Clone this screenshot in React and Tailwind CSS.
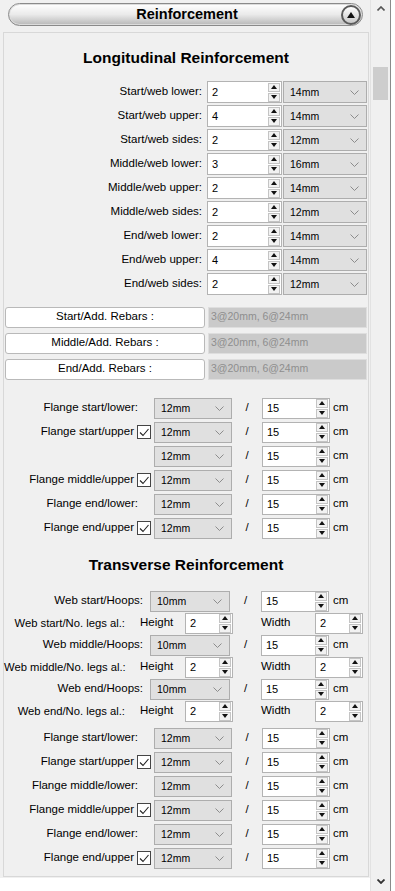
import React from 'react';

const longRows = [
  ['Start/web lower:', '2', '14mm'],
  ['Start/web upper:', '4', '14mm'],
  ['Start/web sides:', '2', '12mm'],
  ['Middle/web lower:', '3', '16mm'],
  ['Middle/web upper:', '2', '14mm'],
  ['Middle/web sides:', '2', '12mm'],
  ['End/web lower:', '2', '14mm'],
  ['End/web upper:', '4', '14mm'],
  ['End/web sides:', '2', '12mm'],
];

const addRows = ['Start/Add. Rebars :', 'Middle/Add. Rebars :', 'End/Add. Rebars :'];

const flangeTop = [
  ['Flange start/lower:', false],
  ['Flange start/upper', true],
  ['', null],
  ['Flange middle/upper', true],
  ['Flange end/lower:', false],
  ['Flange end/upper', true],
];

const flangeBottom = [
  ['Flange start/lower:', false],
  ['Flange start/upper', true],
  ['Flange middle/lower:', false],
  ['Flange middle/upper', true],
  ['Flange end/lower:', false],
  ['Flange end/upper', true],
];

const webRows = ['Web start', 'Web middle', 'Web end'];

function Spin() {
  return (
    <div className="flex flex-col gap-[1px] w-[12px]">
      <div className="h-[9px] border border-[#c4c4c4] bg-[#f2f2f2] flex items-center justify-center">
        <svg width="6" height="4" viewBox="0 0 6 4">
          <path d="M0 4 L3 0 L6 4 Z" fill="#111" />
        </svg>
      </div>
      <div className="h-[9px] border border-[#c4c4c4] bg-[#f2f2f2] flex items-center justify-center">
        <svg width="6" height="4" viewBox="0 0 6 4">
          <path d="M0 0 L6 0 L3 4 Z" fill="#111" />
        </svg>
      </div>
    </div>
  );
}

function NumInput({ value, className }) {
  return (
    <div className={`h-[21px] bg-white border border-[#b3b3b3] flex items-center pl-[4px] pr-[1px] ${className}`}>
      <span className="flex-1 text-[11px] leading-none text-black">{value}</span>
      <Spin />
    </div>
  );
}

function Select({ value, className }) {
  return (
    <div className={`h-[21px] bg-[#e0e0e0] border border-[#adadad] flex items-center pl-[6px] pr-[7px] ${className}`}>
      <span className="flex-1 text-[10.5px] leading-none text-black">{value}</span>
      <svg width="9" height="5" viewBox="0 0 9 5">
        <path d="M0.5 0.5 L4.5 4.5 L8.5 0.5" stroke="#8c8c8c" fill="none" />
      </svg>
    </div>
  );
}

function Check() {
  return (
    <div className="w-[14px] h-[14px] border border-[#444] bg-white flex items-center justify-center ml-[3px]">
      <svg width="10" height="9" viewBox="0 0 10 9">
        <path d="M1 4.5 L4 7.5 L9.5 1" stroke="#222" strokeWidth="1.1" fill="none" />
      </svg>
    </div>
  );
}

function FlangeRow({ label, check }) {
  return (
    <div className="h-[24px] flex items-center">
      <div className={`w-[148px] flex items-center justify-end ${check ? 'pr-[1px]' : 'pr-[14px]'}`}>
        <span className="whitespace-nowrap">{label}</span>
        {check && <Check />}
      </div>
      <Select value="12mm" className="ml-[2px] w-[78px]" />
      <span className="w-[30px] text-center">/</span>
      <NumInput value="15" className="w-[68px]" />
      <span className="ml-[3px]">cm</span>
    </div>
  );
}

function Title({ children }) {
  return (
    <h2 className="h-[20px] leading-[20px] text-center font-bold text-[15.5px] text-black">{children}</h2>
  );
}

export default function App() {
  return (
    <div className="w-[395px] h-[891px] bg-white flex overflow-hidden text-[11.5px] text-black font-['Liberation_Sans',Arial,sans-serif]">
      <div className="w-[370px] h-[878px] bg-[#f0f0f0] flex flex-col">
        <div className="h-[32px] pt-[3px] pl-[8px] pr-[7px]">
          <div className="h-[23px] rounded-full border border-[#8a8a8a] bg-linear-to-b from-white via-[#eaeaea] to-[#b8b8b8] shadow-[inset_0_0_0_1px_#dcdcdc] flex items-center pr-[1px]">
            <span className="flex-1 text-center font-bold text-[14.5px] text-black pl-[24px]">Reinforcement</span>
            <div className="w-[20px] h-[20px] rounded-full border-2 border-[#5a5a5a] bg-linear-to-b from-white to-[#c8c8c8] flex items-center justify-center">
              <svg width="8" height="6" viewBox="0 0 8 6">
                <path d="M0 6 L4 0 L8 6 Z" fill="#111" />
              </svg>
            </div>
          </div>
        </div>

        <div className="ml-[3px] w-[366px] h-[845px] border border-[#d8d8d8] flex flex-col pt-[15px]">
          <Title>Longitudinal Reinforcement</Title>

          <div className="mt-[12px] flex flex-col">
            {longRows.map(([label, n, d]) => (
              <div key={label} className="h-[24px] flex items-center">
                <span className="w-[200px] text-right pr-[2px] whitespace-nowrap">{label}</span>
                <NumInput value={n} className="ml-[3px] w-[75px] h-[22px]" />
                <Select value={d} className="ml-[1px] w-[84px] h-[22px]" />
              </div>
            ))}
          </div>

          <div className="mt-[8px] flex flex-col">
            {addRows.map((label) => (
              <div key={label} className="h-[26px] flex items-center">
                <div className="ml-[1px] w-[200px] h-[21px] bg-white border border-[#b9b9b9] rounded-[3px] flex items-center justify-center">
                  {label}
                </div>
                <div className="ml-[3px] w-[159px] h-[21px] bg-[#cacaca] border border-[#dedede] flex items-center pl-[2px] text-[10.5px] text-[#8e8e8e]">
                  3@20mm, 6@24mm
                </div>
              </div>
            ))}
          </div>

          <div className="mt-[14px] flex flex-col">
            {flangeTop.map(([label, check], i) => (
              <FlangeRow key={i} label={label} check={check} />
            ))}
          </div>

          <div className="mt-[15px]">
            <Title>Transverse Reinforcement</Title>
          </div>

          <div className="mt-[15px] flex flex-col">
            {webRows.map((w) => (
              <React.Fragment key={w}>
                <div className="h-[22px] flex items-center">
                  <span className="w-[146px] text-right pr-[7px] whitespace-nowrap">{w}/Hoops:</span>
                  <Select value="10mm" className="w-[80px]" />
                  <span className="w-[31px] text-center">/</span>
                  <NumInput value="15" className="w-[68px]" />
                  <span className="ml-[4px]">cm</span>
                </div>
                <div className="h-[22px] flex items-center">
                  <span className="w-[121px] text-right whitespace-nowrap text-[11.25px]">{w}/No. legs al.:</span>
                  <span className="w-[60px] pl-[15px]">Height</span>
                  <NumInput value="2" className="w-[48px]" />
                  <span className="w-[82px] pl-[28px]">Width</span>
                  <NumInput value="2" className="w-[48px]" />
                </div>
              </React.Fragment>
            ))}
          </div>

          <div className="mt-[4px] flex flex-col">
            {flangeBottom.map(([label, check], i) => (
              <FlangeRow key={i} label={label} check={check} />
            ))}
          </div>
        </div>
      </div>

      <div className="w-[20px] h-[891px] bg-[#f0f0f0] border-l border-[#e2e2e2] flex flex-col items-center">
        <div className="h-[17px] flex items-center justify-center">
          <svg width="8" height="5" viewBox="0 0 8 5">
            <path d="M0.5 4.5 L4 1 L7.5 4.5" stroke="#555" strokeWidth="1.6" fill="none" />
          </svg>
        </div>
        <div className="mt-[50px] w-[15px] h-[33px] bg-[#cdcdcd]" />
        <div className="flex-1" />
        <div className="h-[20px] flex items-center justify-center">
          <svg width="8" height="5" viewBox="0 0 8 5">
            <path d="M0.5 0.5 L4 4 L7.5 0.5" stroke="#333" strokeWidth="1.8" fill="none" />
          </svg>
        </div>
      </div>
      <div className="w-[5px] h-[891px] bg-white border-l border-[#8a8a8a]" />
    </div>
  );
}
